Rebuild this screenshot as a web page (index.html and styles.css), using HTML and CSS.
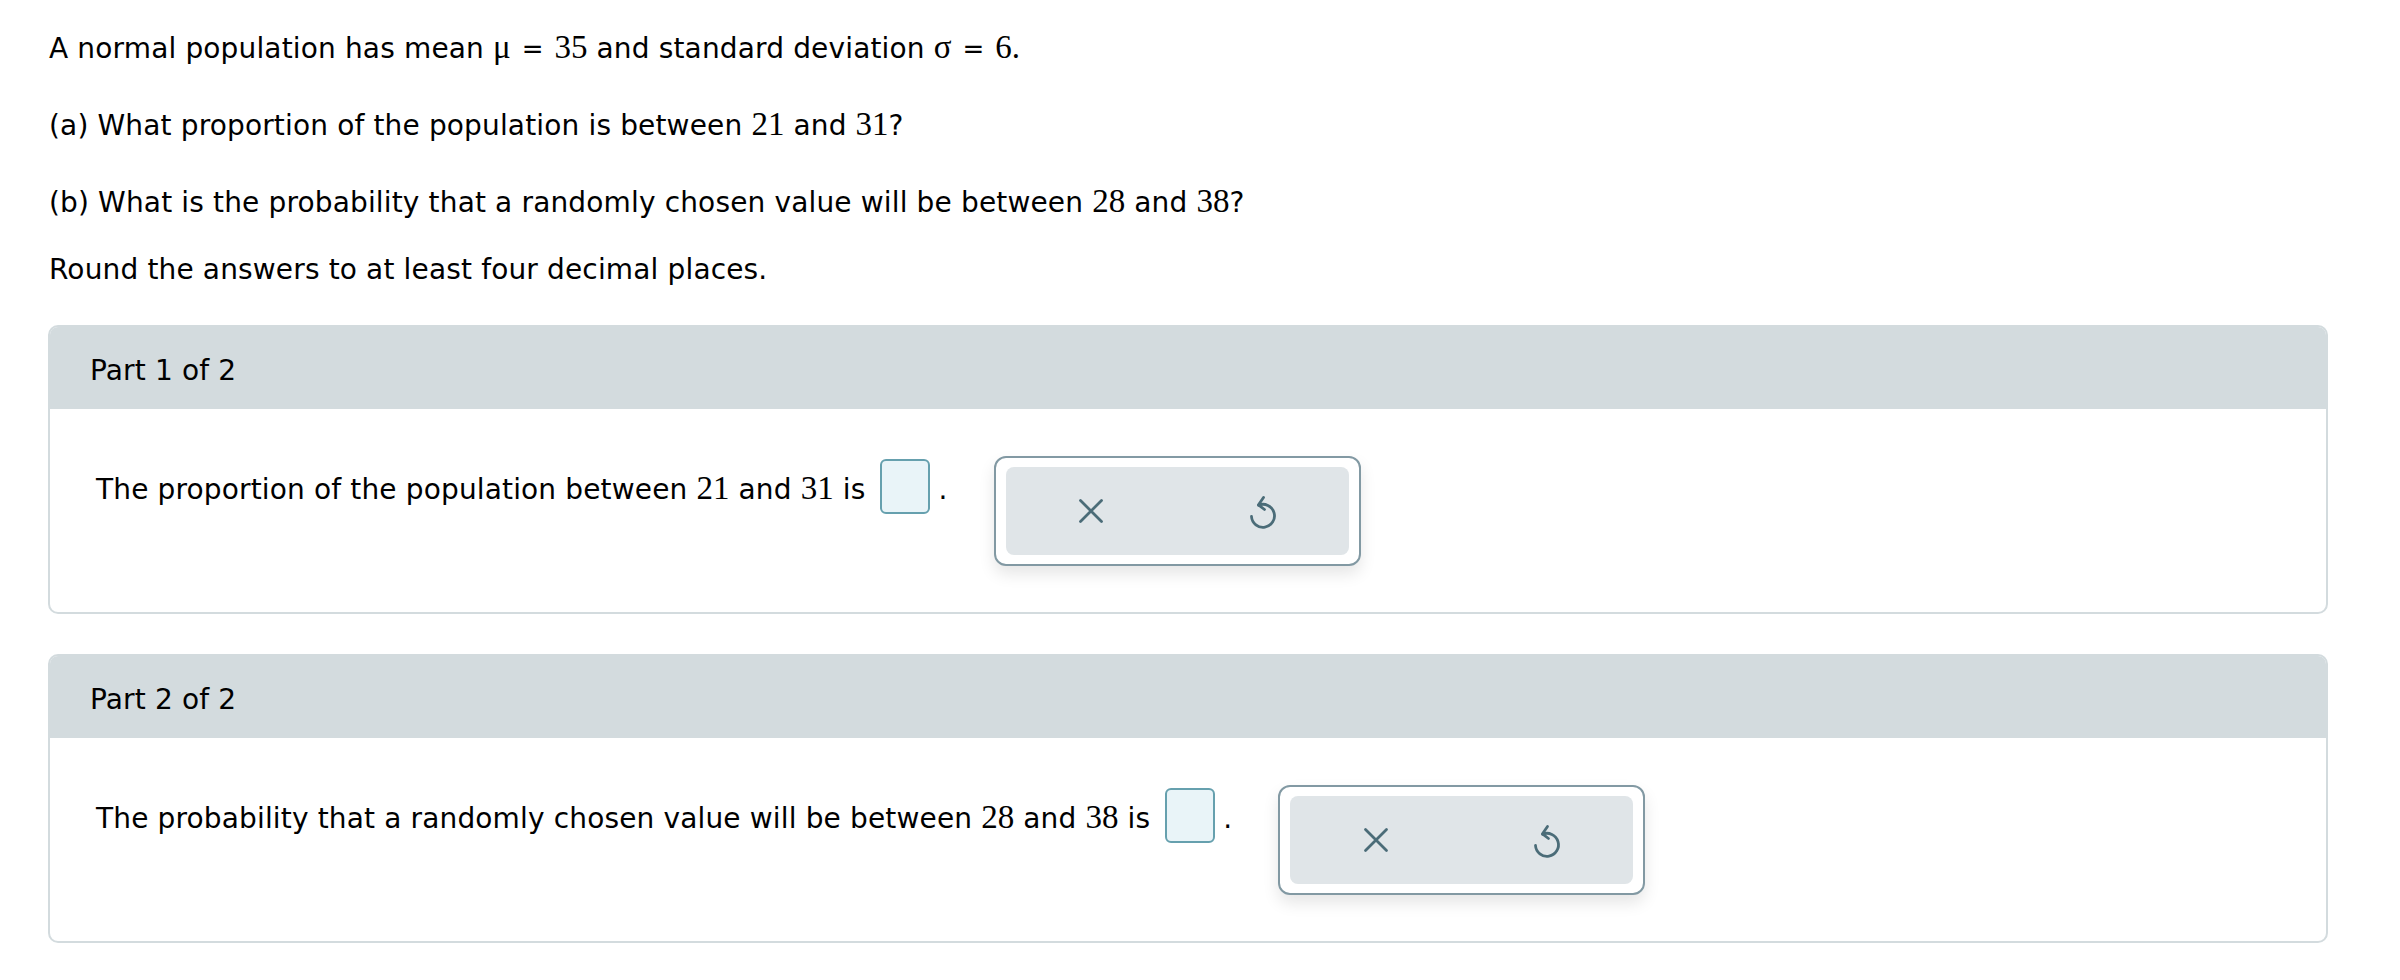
FILE: index.html
```html
<!DOCTYPE html>
<html>
<head>
<meta charset="utf-8">
<link rel="stylesheet" href="styles.css">
</head>
<body>
<div class="page">
  <p class="q q1">A normal population has mean <span class="m">μ<span class="rel">=</span>35</span> and standard deviation <span class="m">σ<span class="rel">=</span>6.</span></p>
  <p class="q q2">(a) What proportion of the population is between <span class="m">21</span> and <span class="m">31</span>?</p>
  <p class="q q3">(b) What is the probability that a randomly chosen value will be between <span class="m">28</span> and <span class="m">38</span>?</p>
  <p class="q q4">Round the answers to at least four decimal places.</p>

  <section class="panel">
    <div class="panel-head">Part 1 of 2</div>
    <div class="panel-body">
      <div class="row">
        <div class="stmt">
          <span class="stmt-text">The proportion of the population between <span class="m">21</span> and <span class="m">31</span> is</span>
          <span class="box"></span><span class="dot">.</span>
        </div>
        <div class="tools">
          <div class="tools-inner">
            <button class="tbtn" aria-label="clear">
              <svg width="26" height="26" viewBox="0 0 26 26"><path d="M2.5 2.5 L23.5 23.5 M23.5 2.5 L2.5 23.5" stroke="#4b6c78" stroke-width="2.8" stroke-linecap="round" fill="none"/></svg>
            </button>
            <button class="tbtn" aria-label="undo">
              <svg width="28" height="38" viewBox="0 0 28 38"><path d="M9.5 13.2 A11.5 11.5 0 1 1 2.5 24.5" stroke="#4b6c78" stroke-width="2.8" stroke-linecap="round" fill="none"/><path d="M14.5 5.5 L9.5 12.8 L15.5 17.5" stroke="#4b6c78" stroke-width="2.8" stroke-linecap="round" stroke-linejoin="round" fill="none"/></svg>
            </button>
          </div>
        </div>
      </div>
    </div>
  </section>

  <section class="panel">
    <div class="panel-head">Part 2 of 2</div>
    <div class="panel-body">
      <div class="row">
        <div class="stmt">
          <span class="stmt-text">The probability that a randomly chosen value will be between <span class="m">28</span> and <span class="m">38</span> is</span>
          <span class="box"></span><span class="dot">.</span>
        </div>
        <div class="tools">
          <div class="tools-inner">
            <button class="tbtn" aria-label="clear">
              <svg width="26" height="26" viewBox="0 0 26 26"><path d="M2.5 2.5 L23.5 23.5 M23.5 2.5 L2.5 23.5" stroke="#4b6c78" stroke-width="2.8" stroke-linecap="round" fill="none"/></svg>
            </button>
            <button class="tbtn" aria-label="undo">
              <svg width="28" height="38" viewBox="0 0 28 38"><path d="M9.5 13.2 A11.5 11.5 0 1 1 2.5 24.5" stroke="#4b6c78" stroke-width="2.8" stroke-linecap="round" fill="none"/><path d="M14.5 5.5 L9.5 12.8 L15.5 17.5" stroke="#4b6c78" stroke-width="2.8" stroke-linecap="round" stroke-linejoin="round" fill="none"/></svg>
            </button>
          </div>
        </div>
      </div>
    </div>
  </section>
</div>
</body>
</html>
```

FILE: styles.css
```css
html, body {
  margin: 0;
  padding: 0;
  background: #ffffff;
}
body {
  font-family: "DejaVu Sans", Verdana, sans-serif;
  font-size: 28px;
  letter-spacing: 0.15px;
  color: #000;
}
.page {
  padding: 27px 72px 40px 48px;
}
.q {
  margin: 0;
  line-height: 40px;
  padding-left: 1px;
}
.q2 { margin-top: 35px; }
.q3 { margin-top: 35px; }
.q4 { margin-top: 27px; }
.m {
  font-family: "Liberation Serif", "Times New Roman", serif;
  font-size: 33px;
  letter-spacing: 0;
}
.rel {
  font-family: "DejaVu Sans", sans-serif;
  font-size: 26px;
  margin: 0 11px;
}
.panel {
  border: 2px solid #d3dbde;
  border-radius: 10px;
  overflow: hidden;
  margin-top: 35px;
}
.panel + .panel {
  margin-top: 40px;
}
.panel-head {
  background: #d3dbde;
  box-sizing: border-box;
  height: 84px;
  padding-top: 6px;
  line-height: 80px;
  padding-left: 42px;
  margin: -2px -2px 0;
}
.panel-body {
  padding: 47px 46px 46px;
}
.row {
  display: flex;
  align-items: flex-start;
}
.stmt {
  display: flex;
  align-items: center;
  height: 55px;
  margin-top: 3px;
  white-space: nowrap;
}
.stmt-text {
  margin-top: 4px;
}
.box {
  display: inline-block;
  width: 46px;
  height: 51px;
  border: 2px solid #66a0ae;
  background: #e9f4f8;
  border-radius: 6px;
  margin-left: 15px;
}
.dot {
  margin-left: 8px;
  margin-top: 6px;
}
.tools {
  margin-left: 46px;
  width: 363px;
  height: 106px;
  border: 2px solid #8299a3;
  border-radius: 12px;
  background: #fff;
  box-shadow: 0 8px 16px rgba(0, 0, 0, 0.10);
  display: flex;
  align-items: center;
  justify-content: center;
}
.tools-inner {
  width: 343px;
  height: 88px;
  background: #e0e5e8;
  border-radius: 8px;
  display: flex;
}
.tbtn {
  flex: 1;
  border: 0;
  background: transparent;
  display: flex;
  align-items: center;
  justify-content: center;
  padding: 0;
  cursor: pointer;
}
.tbtn svg {
  display: block;
}
```
